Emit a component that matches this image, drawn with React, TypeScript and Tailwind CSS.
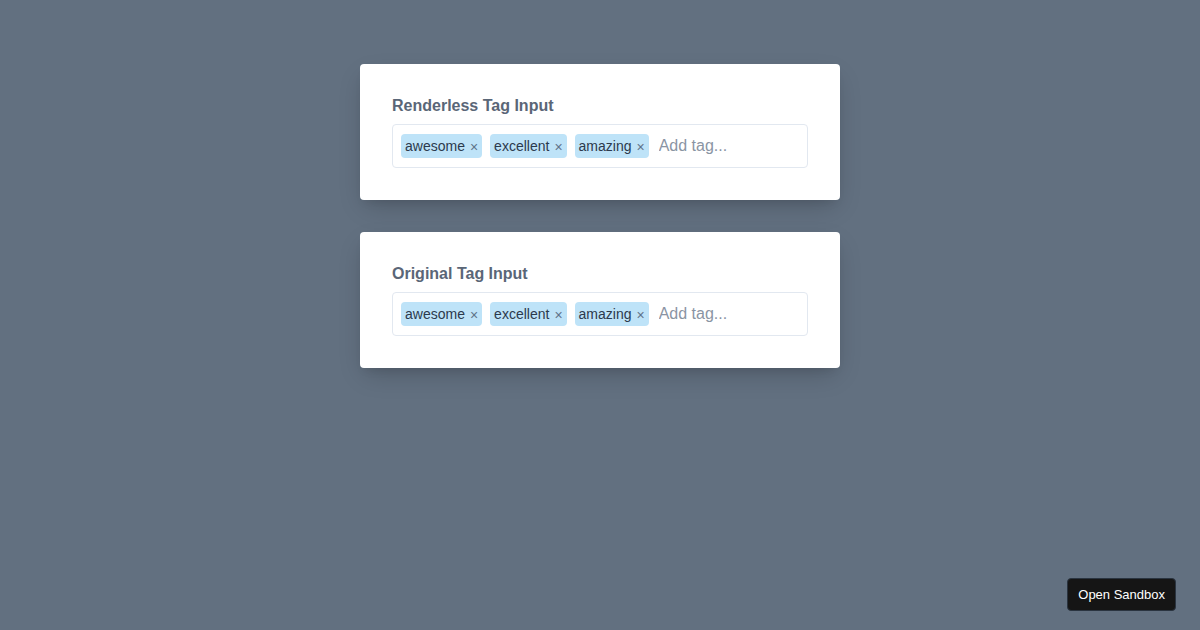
import { useState } from "react";

function TagInput({ title }: { title: string }) {
  const [tags, setTags] = useState(["awesome", "excellent", "amazing"]);
  const [value, setValue] = useState("");

  const onKey = (e: React.KeyboardEvent<HTMLInputElement>) => {
    if (e.key === "Enter" && value.trim()) {
      setTags([...tags, value.trim()]);
      setValue("");
    }
  };

  return (
    <div className="w-[480px] bg-white rounded px-8 pt-8 pb-8 shadow-[0_10px_25px_-5px_rgba(0,0,0,0.2),0_6px_10px_-5px_rgba(0,0,0,0.1)]">
      <div className="text-[16px] leading-[20px] font-bold text-[#5a6677] mb-2">{title}</div>
      <div className="flex flex-wrap items-center border border-[#e2e8f0] rounded px-2 py-2 h-[44px]">
        {tags.map((t) => (
          <span
            key={t}
            className="flex items-center h-6 bg-[#bee3f8] rounded pl-1 pr-1 mr-2 text-[14px] text-[#2c3a4d]"
          >
            {t}
            <button
              onClick={() => setTags(tags.filter((x) => x !== t))}
              className="ml-[5px] text-[#5f7389] text-[14px] leading-none mt-[2px]"
            >
              ×
            </button>
          </span>
        ))}
        <input
          value={value}
          onChange={(e) => setValue(e.target.value)}
          onKeyDown={onKey}
          placeholder="Add tag..."
          className="flex-1 min-w-0 ml-[2px] outline-none text-[16px] text-[#2d3748] placeholder-[#8a94a3]"
        />
      </div>
    </div>
  );
}

export default function App() {
  return (
    <div
      className="relative w-full h-[630px] bg-[#627080] flex flex-col items-center pt-16 gap-8"
      style={{ fontFamily: '"Liberation Sans", Arial, sans-serif' }}
    >
      <TagInput title="Renderless Tag Input" />
      <TagInput title="Original Tag Input" />
      <button className="absolute right-6 bottom-[19px] h-[33px] px-[10px] bg-[#151515] text-white text-[13px] rounded border border-[#2a3440]">
        Open Sandbox
      </button>
    </div>
  );
}
